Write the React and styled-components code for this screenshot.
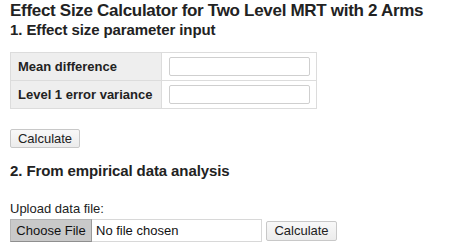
import React from "react";
import styled, { createGlobalStyle } from "styled-components";

const Global = createGlobalStyle`
  html, body { margin: 0; padding: 0; background: #fff; }
  body { font-family: "Liberation Sans", Arial, sans-serif; color: #111; }
`;

const Page = styled.div`
  padding: 1px 10px 0 10px;
`;

const Title = styled.h1`
  margin: 0;
  font-size: 17px;
  letter-spacing: -0.3px;
  line-height: 20px;
  font-weight: bold;
  color: #222;
  white-space: nowrap;
`;

const Heading = styled.h2`
  margin: ${(p) => p.$mt || 0}px 0 0 0;
  font-size: 15px;
  letter-spacing: -0.1px;
  line-height: 18px;
  font-weight: bold;
  color: #222;
  white-space: nowrap;
`;

const Table = styled.table`
  margin-top: 13px;
  border-collapse: collapse;
  width: 307px;
  border: 1px solid #dcdcdc;
`;

const Row = styled.tr`
  height: 28px;
  border-bottom: 1px solid #dcdcdc;
`;

const LabelCell = styled.td`
  background: #eeeeee;
  border-right: 1px solid #dcdcdc;
  padding: 0 7px;
  font-size: 13px;
  font-weight: bold;
  color: #222;
  width: 138px;
  white-space: nowrap;
`;

const InputCell = styled.td`
  padding: 0 6px 0 7px;
  background: #fff;
`;

const TextInput = styled.input`
  display: block;
  box-sizing: border-box;
  width: 141px;
  height: 19px;
  border: 1px solid #cfcfcf;
  border-radius: 2px;
  padding: 0 3px;
  font-family: inherit;
  font-size: 13px;
`;

const Button = styled.button`
  box-sizing: border-box;
  height: ${(p) => p.$h || 19}px;
  width: ${(p) => p.$w}px;
  padding: 0;
  font-family: "Liberation Sans", Arial, sans-serif;
  font-size: 13px;
  color: #222;
  background: linear-gradient(#f8f8f8, #ececec);
  border: 1px solid #c8c8c8;
  border-radius: 2px;
`;

const ButtonWrap = styled.div`
  margin-top: 20px;
  line-height: 0;
`;

const Label = styled.div`
  margin-top: 21px;
  font-size: 13px;
  line-height: 15px;
  color: #222;
`;

const UploadRow = styled.div`
  margin-top: 3px;
  display: flex;
  align-items: center;
  gap: 4px;
`;

const FileBox = styled.div`
  box-sizing: border-box;
  width: 252px;
  height: 23px;
  display: flex;
  border: 1px solid #d8d8d8;
  border-left: none;
`;

const ChooseBtn = styled.div`
  box-sizing: border-box;
  width: 82px;
  height: 23px;
  margin-top: -1px;
  background: #c9c9c9;
  border: 1px solid #b5b5b5;
  border-bottom-color: #8f8f8f;
  border-right-color: #9a9a9a;
  font-size: 13px;
  line-height: 21px;
  text-align: center;
  color: #111;
`;

const FileName = styled.div`
  padding-left: 4px;
  font-size: 13px;
  line-height: 21px;
  color: #111;
`;

export default function App() {
  return (
    <Page>
      <Global />
      <Title>Effect Size Calculator for Two Level MRT with 2 Arms</Title>
      <Heading>1. Effect size parameter input</Heading>
      <Table>
        <tbody>
          <Row>
            <LabelCell>Mean difference</LabelCell>
            <InputCell><TextInput /></InputCell>
          </Row>
          <Row>
            <LabelCell>Level 1 error variance</LabelCell>
            <InputCell><TextInput /></InputCell>
          </Row>
        </tbody>
      </Table>
      <ButtonWrap>
        <Button $w={70}>Calculate</Button>
      </ButtonWrap>
      <Heading $mt={14}>2. From empirical data analysis</Heading>
      <Label>Upload data file:</Label>
      <UploadRow>
        <FileBox>
          <ChooseBtn>Choose File</ChooseBtn>
          <FileName>No file chosen</FileName>
        </FileBox>
        <Button $w={71} $h={20}>Calculate</Button>
      </UploadRow>
    </Page>
  );
}
